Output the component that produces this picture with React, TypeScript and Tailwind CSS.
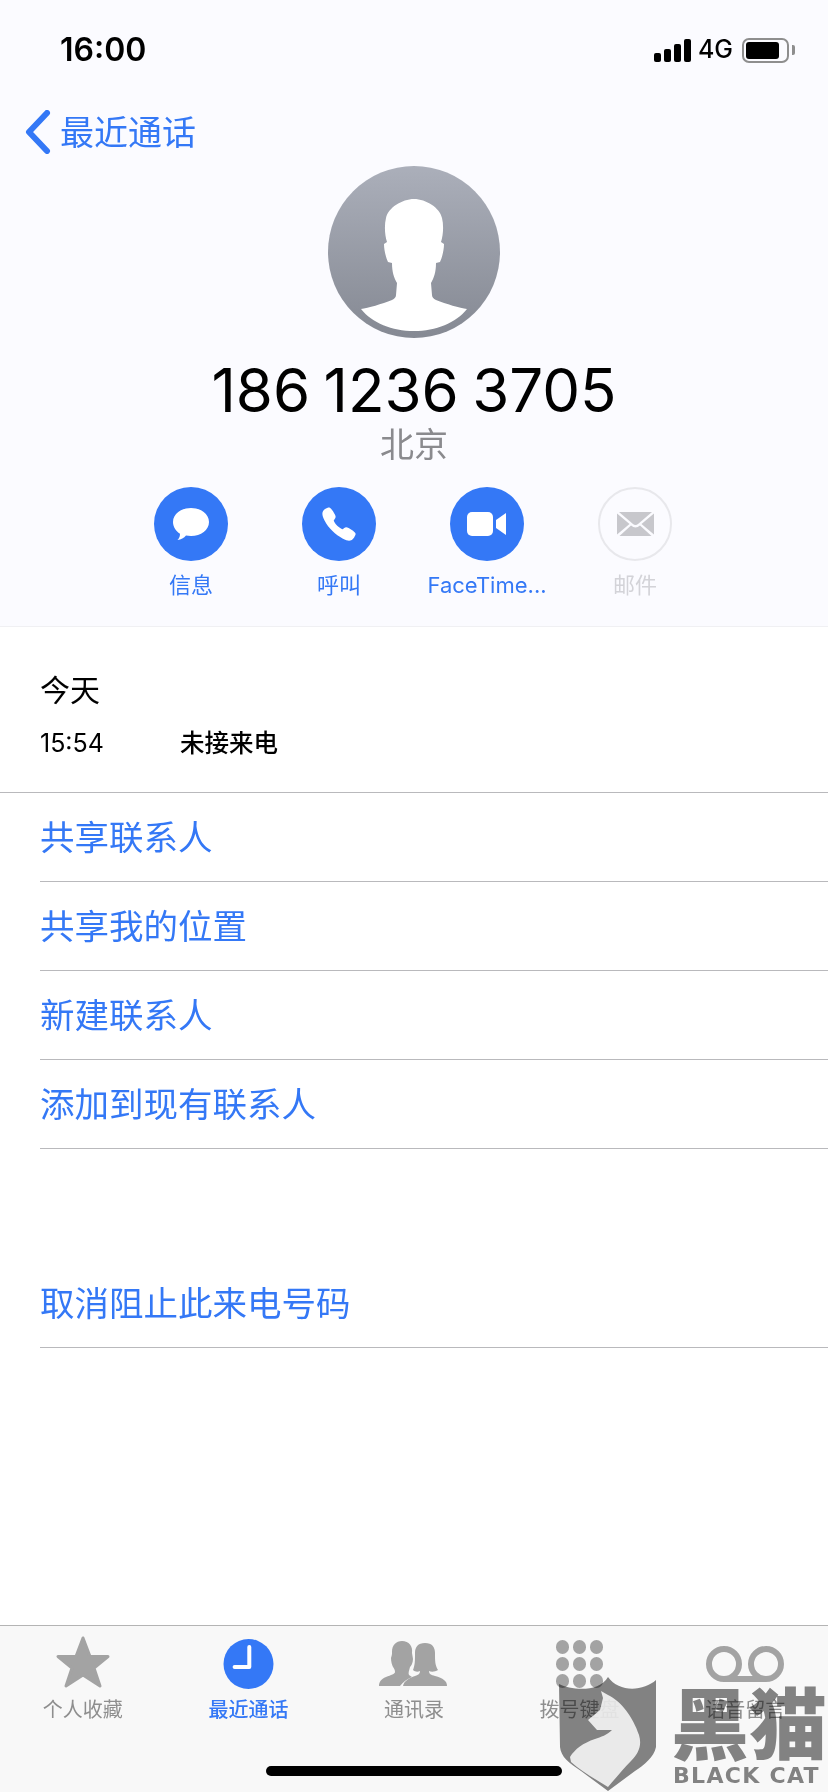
import React from 'react';
import { IoCall } from 'react-icons/io5';

const font = { fontFamily: 'Inter, "Noto Sans CJK SC", sans-serif' };

function Avatar() {
  return (
    <div className="w-[172px] h-[172px] rounded-full overflow-hidden bg-linear-to-b from-[#abafba] to-[#858993]">
      <svg viewBox="0 0 172 172" className="w-full h-full">
        <path
          fill="#fff"
          d="M86 33C98 33 112 42 114 52C116 60 115 70 113 76L116 78C116 84 114 92 112 96L108 97C108 106 106 112 103 117L104 129Q104 132 108 134C118 138 132 142 139 143C128 157 108 165 86 165C64 165 44 157 33 143C40 142 54 138 64 134Q68 132 68 129L69 117C66 112 64 106 64 97L60 96C58 92 56 84 56 78L59 76C57 70 56 60 58 52C60 42 74 33 86 33Z"
        />
      </svg>
    </div>
  );
}

function ActionButton({ label, disabled, children }: { label: string; disabled?: boolean; children: React.ReactNode }) {
  return (
    <div className="w-[148px] flex flex-col items-center">
      <div
        className={
          disabled
            ? 'w-[74px] h-[74px] rounded-full border-2 border-[#e8e8ec] flex items-center justify-center'
            : 'w-[74px] h-[74px] rounded-full bg-[#3478f6] flex items-center justify-center'
        }
      >
        {children}
      </div>
      <div className={disabled ? 'mt-[11px] h-[26px] leading-[26px] text-[22px] text-[#d3d3d8]' : 'mt-[11px] h-[26px] leading-[26px] text-[22px] text-[#3478f6]'}>
        {label}
      </div>
    </div>
  );
}

function Row({ text }: { text: string }) {
  return (
    <div className="ml-[40px] h-[89px] pt-[2px] border-b border-[#b9b9bc] flex items-center text-[34.500px] text-[#3478f6]">
      {text}
    </div>
  );
}

function Tab({ label, active, children }: { label: string; active?: boolean; children: React.ReactNode }) {
  return (
    <div className="flex flex-col items-center">
      <div className="h-[56px] w-[90px]">{children}</div>
      <div className={active ? 'mt-[5px] h-[28px] leading-[28px] text-[20px] font-medium text-[#3478f6]' : 'mt-[5px] h-[28px] leading-[28px] text-[20px] text-[#8e8e8e]'}>
        {label}
      </div>
    </div>
  );
}

function Watermark() {
  return (
    <div className="absolute left-[559px] top-[1677px] w-[269px] h-[115px]">
      <svg viewBox="0 0 97 114" className="absolute left-0 top-0 w-[97px] h-[114px] mix-blend-multiply">
        <path fill="#868686" d="M0 7C12 13 40 16 49 0C60 16 85 14 97 3L97 70C95 80 85 88 76 94L49 114L22 94C10 86 2 80 1 70Z" />
      </svg>
      <svg viewBox="0 0 97 114" className="absolute left-0 top-0 w-[97px] h-[114px]">
        <path fill="#fdfdfd" fillOpacity="0.85" d="M42 14L49 18C62 24 74 40 80 58C83 68 80 76 72 84C64 92 56 102 49 110C36 102 22 94 12 85L11 80C16 72 24 66 36 62C42 60 48 58 53 53L38 53L29 43L41 33L44 21Z" />
      </svg>
      <div
        className="absolute left-[112px] top-[1px] w-[157px] text-[78px] leading-[84px] font-black text-[#868686] mix-blend-multiply whitespace-nowrap"
        style={{ fontFamily: '"Noto Sans CJK SC", sans-serif' }}
      >
        黑猫
      </div>
      <div
        className="absolute left-[114px] top-[85px] text-[22px] leading-[28px] font-bold tracking-[1.300px] text-[#868686] mix-blend-multiply whitespace-nowrap"
        style={{ fontFamily: '"DejaVu Sans", sans-serif' }}
      >
        BLACK CAT
      </div>
    </div>
  );
}

export default function App() {
  return (
    <div className="relative w-[828px] h-[1792px] bg-white flex flex-col overflow-hidden" style={font}>
      {/* Header */}
      <div className="h-[627px] bg-[#fbfbff] border-b border-[#f0f0f3] flex flex-col">
        <div className="mt-[28px] h-[44px] flex items-center justify-between pl-[60px] pr-[33px]">
          <span className="text-[32px] font-semibold text-black">16:00</span>
          <div className="flex items-center">
            <div className="flex items-end gap-[3px] h-[23px]">
              <div className="w-[7px] h-[9px] rounded-[2px] bg-black" />
              <div className="w-[7px] h-[13px] rounded-[2px] bg-black" />
              <div className="w-[7px] h-[18px] rounded-[2px] bg-black" />
              <div className="w-[7px] h-[23px] rounded-[2px] bg-black" />
            </div>
            <span className="ml-[7px] text-[25px] font-medium text-black">4G</span>
            <div className="ml-[9px] w-[47px] h-[25px] rounded-[7px] border-2 border-[#8e8e8e] p-[2px]">
              <div className="w-[33px] h-full rounded-[3px] bg-black" />
            </div>
            <div className="ml-[3px] w-[3px] h-[10px] rounded-r-[2px] bg-[#8e8e8e]" />
          </div>
        </div>

        <div className="mt-[38px] h-[44px] flex items-center pl-[25px]">
          <svg width="26" height="44" viewBox="0 0 26 44" fill="none">
            <path d="M22 3L4 22L22 41" stroke="#3478f6" strokeWidth="6" strokeLinecap="round" strokeLinejoin="round" />
          </svg>
          <span className="ml-[9px] text-[34px] text-[#3478f6]">最近通话</span>
        </div>

        <div className="mt-[12px] flex justify-center">
          <Avatar />
        </div>

        <div className="mt-[18px] h-[68px] leading-[68px] text-center text-[60px] text-black [word-spacing:-3.500px]">186 1236 3705</div>
        <div className="mt-[1px] h-[40px] leading-[40px] text-center text-[34px] text-[#8a8a8e]">北京</div>

        <div className="mt-[22px] flex justify-center pr-[2px]">
          <ActionButton label="信息">
            <svg width="38" height="34" viewBox="0 0 38 34">
              <path
                fill="#fff"
                d="M19 1C29 1 37 7 37 15C37 23 29 29 19 29C17 29 15.500 28.800 14 28.500C12 31 9 32.800 5.500 33C7.500 31 8 29 8 26.800C4 24 1 20 1 15C1 7 9 1 19 1Z"
              />
            </svg>
          </ActionButton>
          <ActionButton label="呼叫">
            <IoCall className="text-white" size={38} />
          </ActionButton>
          <ActionButton label="FaceTime...">
            <svg width="40" height="24" viewBox="0 0 40 24">
              <rect x="0" y="0" width="26" height="24" rx="5" fill="#fff" />
              <path fill="#fff" d="M29 8L39 1V23L29 16Z" />
            </svg>
          </ActionButton>
          <ActionButton label="邮件" disabled>
            <svg width="37" height="24" viewBox="0 0 37 24" fill="#c7c7cc">
              <path d="M0 1.500L12.500 12L0 22.500Z" />
              <path d="M37 1.500L24.500 12L37 22.500Z" />
              <path d="M2 0H35L21 12C19.500 13.200 17.500 13.200 16 12Z" />
              <path d="M14 13.500C17 16 20 16 23 13.500L34.500 24H2.500Z" />
            </svg>
          </ActionButton>
        </div>
      </div>

      {/* Call info */}
      <div className="pl-[40px] pt-[43px] h-[166px] border-b border-[#b9b9bc]">
        <div className="h-[40px] leading-[40px] text-[30px] text-black">今天</div>
        <div className="mt-[18px] h-[30px] leading-[30px] flex text-[25px] text-black">
          <span className="w-[140px]">15:54</span>
          <span className="font-medium text-[24.500px]">未接来电</span>
        </div>
      </div>

      <Row text="共享联系人" />
      <Row text="共享我的位置" />
      <Row text="新建联系人" />
      <Row text="添加到现有联系人" />
      <div className="mt-[110px]">
        <Row text="取消阻止此来电号码" />
      </div>

      <div className="flex-1" />

      {/* Tab bar */}
      <div className="h-[167px] bg-[#f8f8f8] border-t border-[#b4b4b4] pt-[9px] relative">
        <div className="grid grid-cols-5">
          <Tab label="个人收藏">
            <svg viewBox="0 0 90 56" className="w-full h-full">
              <path
                fill="#a3a3a3"
                stroke="#a3a3a3"
                strokeWidth="3"
                strokeLinejoin="round"
                d="M45 3L52 21.500L70 21.500L56 33L62 51L45 40L28 51L34 33L20 21.500L38 21.500Z"
              />
            </svg>
          </Tab>
          <Tab label="最近通话" active>
            <svg viewBox="0 0 90 56" className="w-full h-full">
              <circle cx="45.500" cy="29" r="25" fill="#3478f6" />
              <path d="M46.300 12V32H31.600" fill="none" stroke="#fff" strokeWidth="4" strokeLinecap="round" strokeLinejoin="round" />
            </svg>
          </Tab>
          <Tab label="通讯录">
            <svg viewBox="0 0 90 56" className="w-full h-full" fill="#a3a3a3">
              <path d="M33 6C40 6 44 11 43 18L44 24C44 28 42 31 41 32C40 36 39 38 40 40L43 42C38 44 34 47 31 51H10C10 47 12 44 17 42C22 40 26 39 26 37C26 35 25 33 24 32C23 30 22 27 22 23C23 20 23 19 23 17C23 10 27 6 33 6Z" />
              <path d="M56 8C63 8 66 12 66 18C66 26 66 30 69 35C66 37 62 37 60 36C60 39 62 40 66 41C74 43 78 46 78 51H34C35 46 40 43 46 41C50 40 51 38 51 36C49 37 46 37 44 35C46 30 46 26 46 18C46 12 49 8 56 8Z" />
            </svg>
          </Tab>
          <Tab label="拨号键盘">
            <div className="w-[48px] mx-auto mt-[5px] grid grid-cols-3 gap-x-[3.500px] gap-y-[3.500px]">
              {[0, 1, 2, 3, 4, 5, 6, 7, 8].map((i) => (
                <div key={i} className="w-[13.500px] h-[13.500px] rounded-full bg-[#a3a3a3]" />
              ))}
            </div>
          </Tab>
          <Tab label="语音留言">
            <svg viewBox="0 0 90 56" className="w-full h-full">
              <circle cx="24" cy="29" r="15" fill="none" stroke="#a3a3a3" strokeWidth="6" />
              <circle cx="66" cy="29" r="15" fill="none" stroke="#a3a3a3" strokeWidth="6" />
              <path d="M24 44H66" stroke="#a3a3a3" strokeWidth="6" />
            </svg>
          </Tab>
        </div>
        <div className="absolute left-[266px] bottom-[16px] w-[296px] h-[10px] rounded-full bg-black" />
      </div>

      <Watermark />
    </div>
  );
}
